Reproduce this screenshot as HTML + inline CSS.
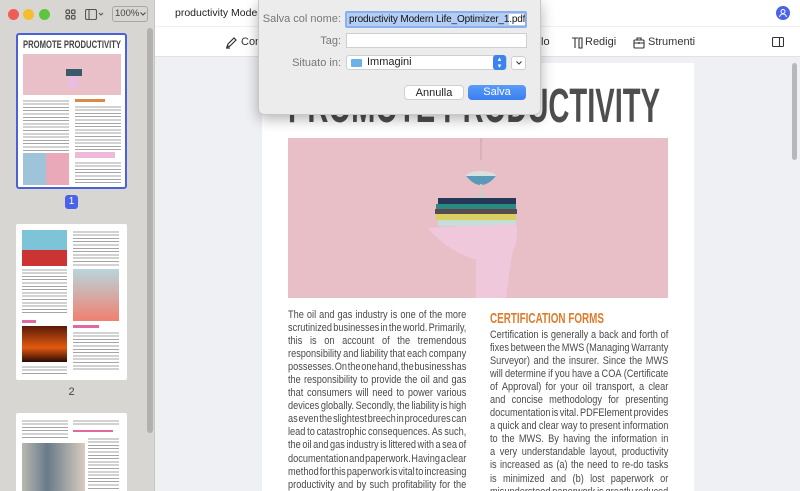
<!DOCTYPE html>
<html style="overflow:hidden;width:800px;height:491px"><head><meta charset="utf-8">
<style>
*{margin:0;padding:0;box-sizing:border-box}
body{width:800px;height:491px;overflow:hidden;font-family:"Liberation Sans",sans-serif;background:#eff0f4;position:relative}
.side{position:absolute;left:0;top:0;width:155px;height:491px;background:#d8d6d3;border-right:1px solid #c8c6c3}
.dot{position:absolute;top:9px;width:11px;height:11px;border-radius:50%}
.sb{position:absolute;left:147px;top:28px;width:6px;height:405px;background:#b3b1ae;border-radius:3px}
.thumb{position:absolute;left:16px;width:111px;background:#fff}
.lines{position:absolute;background:repeating-linear-gradient(#fff 0 1.3px,#a5a5a5 1.3px 2.3px,#fff 2.3px 3.3px)}
.hdr{position:absolute;left:155px;top:0;width:645px;height:57px;background:#fff;border-bottom:1px solid #e2e2e6}
.page{position:absolute;left:262px;top:63px;width:432px;height:428px;background:#fff}
.col{position:absolute;font-size:10.6px;line-height:13.05px;color:#4a4a4a;transform:scaleX(0.87);transform-origin:left top}
.col div{text-align:justify;text-align-last:justify;white-space:nowrap;display:flex;justify-content:space-between}
.col div.l{justify-content:flex-start;gap:3px}
.dlg{position:absolute;left:258px;top:0;width:283px;height:115px;background:#ececec;box-shadow:0 4px 14px rgba(0,0,0,.3);border:1px solid #c8c8c8;border-top:none;border-radius:0 0 6px 6px}
.lab{position:absolute;font-size:11px;color:#777;text-align:right;width:82px;left:0}
.inp{position:absolute;left:87px;height:15px;background:#fff;border:1px solid #cfcfcf}
.btn{position:absolute;top:85px;height:15px;border-radius:4px;font-size:11px;text-align:center;line-height:15px}
.tb{position:absolute;top:36px;font-size:11px;color:#333}
</style></head><body>

<div class="side">
  <div class="dot" style="left:8px;background:#ee5e57"></div>
  <div class="dot" style="left:23px;background:#f5bd30"></div>
  <div class="dot" style="left:39px;background:#5fc53f"></div>
  <svg style="position:absolute;left:65px;top:9px" width="11" height="11" viewBox="0 0 11 11" fill="none" stroke="#555" stroke-width="1.2"><rect x="1" y="1" width="3.5" height="3.5" rx="1"/><rect x="6.5" y="1" width="3.5" height="3.5" rx="1"/><rect x="1" y="6.5" width="3.5" height="3.5" rx="1"/><rect x="6.5" y="6.5" width="3.5" height="3.5" rx="1"/></svg>
  <svg style="position:absolute;left:85px;top:9px" width="20" height="11" viewBox="0 0 20 11" fill="none" stroke="#555" stroke-width="1.1"><rect x="0.5" y="0.5" width="11" height="10" rx="1.5"/><line x1="4" y1="0.5" x2="4" y2="10.5"/><path d="M14 4l2 2 2-2"/></svg>
  <div style="position:absolute;left:112px;top:6px;width:36px;height:16px;border:1px solid #a9a7a4;border-radius:3px;font-size:9.5px;color:#444;line-height:14px;padding-left:2px;white-space:nowrap;overflow:hidden">100%<svg style="position:absolute;left:27px;top:5px" width="6" height="4" viewBox="0 0 6 4" fill="none" stroke="#444"><path d="M0.5 0.5l2.5 2.5 2.5-2.5"/></svg></div>
  <div class="sb"></div>

  <div class="thumb" style="top:33px;height:156px;border:2px solid #4a62d8;border-radius:3px">
    <svg style="position:absolute;left:5px;top:3px" width="98" height="12"><text x="0" y="10" textLength="98" lengthAdjust="spacingAndGlyphs" font-family="Liberation Sans" font-weight="bold" font-size="11" fill="#444">PROMOTE PRODUCTIVITY</text></svg>
    <div style="position:absolute;left:5px;top:19px;width:98px;height:41px;background:#e9c0c8"></div>
    <div style="position:absolute;left:48px;top:34px;width:16px;height:7px;background:#3a5a6a"></div>
    <div style="position:absolute;left:50px;top:41px;width:10px;height:12px;background:#e8bde0"></div>
    <div class="lines" style="left:5px;top:64px;width:46px;height:52px"></div>
    <div style="position:absolute;left:57px;top:64px;width:30px;height:3px;background:#d98a4a"></div>
    <div class="lines" style="left:57px;top:70px;width:46px;height:46px"></div>
    <div style="position:absolute;left:57px;top:117px;width:40px;height:6px;background:#e58bc0;opacity:.6"></div>
    <div style="position:absolute;left:5px;top:118px;width:46px;height:32px;background:linear-gradient(90deg,#9fc3d8 50%,#e9a9b8 50%)"></div>
    <div class="lines" style="left:57px;top:126px;width:46px;height:24px"></div>
  </div>
  <div style="position:absolute;left:65px;top:195px;width:13px;height:14px;background:#4a62e8;border-radius:3px;color:#fff;font-size:10px;text-align:center;line-height:14px">1</div>

  <div class="thumb" style="top:224px;height:156px;border-radius:2px">
    <div style="position:absolute;left:6px;top:6px;width:45px;height:36px;background:linear-gradient(#7ec4d8 0 55%,#c33 55%)"></div>
    <div class="lines" style="left:57px;top:6px;width:46px;height:36px"></div>
    <div class="lines" style="left:6px;top:44px;width:45px;height:46px"></div>
    <div style="position:absolute;left:57px;top:45px;width:46px;height:52px;background:linear-gradient(#b8d6dc,#f08070)"></div>
    <div style="position:absolute;left:6px;top:96px;width:14px;height:3px;background:#e06aa0"></div>
    <div style="position:absolute;left:6px;top:102px;width:45px;height:36px;background:linear-gradient(#5a1a08,#e35a10 60%,#2a0a04)"></div>
    <div style="position:absolute;left:57px;top:101px;width:26px;height:3px;background:#e06aa0"></div>
    <div class="lines" style="left:57px;top:107px;width:46px;height:40px"></div>
    <div class="lines" style="left:6px;top:141px;width:45px;height:10px"></div>
  </div>
  <div style="position:absolute;left:65px;top:386px;width:13px;font-size:11px;color:#444;text-align:center">2</div>

  <div class="thumb" style="top:413px;height:80px;border-radius:2px">
    <div class="lines" style="left:6px;top:6px;width:46px;height:20px"></div>
    <div class="lines" style="left:57px;top:6px;width:46px;height:8px"></div>
    <div style="position:absolute;left:57px;top:17px;width:40px;height:2px;background:#e06aa0"></div>
    <div style="position:absolute;left:6px;top:30px;width:63px;height:50px;background:linear-gradient(90deg,#b8b8b0,#6a7a8a 40%,#d8ccc0)"></div>
    <div class="lines" style="left:72px;top:24px;width:31px;height:56px"></div>
  </div>
</div>

<div class="hdr">
  <div style="position:absolute;left:20px;top:7px;font-size:10.5px;color:#222">productivity Modern L</div>
  <div style="position:absolute;left:0;top:26px;width:645px;height:1px;background:#f0f0f0"></div>
  <svg style="position:absolute;left:70px;top:36px" width="13" height="13" viewBox="0 0 13 13" fill="none" stroke="#333" stroke-width="1.2"><path d="M2 11l1-3 6-6 2 2-6 6z M1 12h4"/></svg>
  <div class="tb" style="left:86px">Con</div>
  <div class="tb" style="left:386px">lo</div>
  <svg style="position:absolute;left:416px;top:37px" width="12" height="12" viewBox="0 0 12 12" fill="none" stroke="#333" stroke-width="1.1"><path d="M1 1h6M4 1v10M8 1h3v10h-3z"/></svg>
  <div class="tb" style="left:430px">Redigi</div>
  <svg style="position:absolute;left:478px;top:37px" width="12" height="12" viewBox="0 0 12 12" fill="none" stroke="#333" stroke-width="1.1"><rect x="1" y="3" width="10" height="8" rx="1"/><path d="M4 3V1h4v2M1 6h10M6 5v2"/></svg>
  <div class="tb" style="left:493px">Strumenti</div>
  <svg style="position:absolute;left:617px;top:37px" width="12" height="10" viewBox="0 0 12 10" fill="none" stroke="#333" stroke-width="1.1"><rect x="0.5" y="0.5" width="11" height="9" rx="1"/><line x1="7.5" y1="0.5" x2="7.5" y2="9.5"/></svg>
  <div style="position:absolute;left:621px;top:6px;width:14px;height:14px;border-radius:50%;background:#4a62e8"></div>
  <svg style="position:absolute;left:621px;top:6px" width="14" height="14" viewBox="0 0 14 14" fill="none" stroke="#fff" stroke-width="1"><circle cx="7" cy="5.5" r="2"/><path d="M3.5 11c.5-2 2-3 3.5-3s3 1 3.5 3"/></svg>
</div>

<div style="position:absolute;left:792px;top:63px;width:5px;height:97px;background:#b8b8bc;border-radius:3px"></div>

<div class="page"></div>
<svg style="position:absolute;left:288px;top:84px" width="374" height="44"><text x="0" y="38" textLength="372" lengthAdjust="spacingAndGlyphs" font-family="Liberation Sans" font-weight="bold" font-size="48" fill="#4e4e4e">PROMOTE PRODUCTIVITY</text></svg>
<div style="position:absolute;left:288px;top:138px;width:380px;height:160px;background:#e8bfc7;overflow:hidden">
  <svg width="380" height="160" viewBox="0 0 380 160">
    <line x1="193" y1="0" x2="193" y2="22" stroke="#c8a0a8" stroke-width="1"/>
    <ellipse cx="193" cy="38" rx="15" ry="5" fill="#d8e0e0"/>
    <path d="M178 38q15 18 30 0z" fill="#5a9ab8"/>
    <rect x="192" y="46" width="2" height="12" fill="#ccc"/>
    <ellipse cx="193" cy="59" rx="7" ry="2" fill="#ccc"/>
    <rect x="150" y="60" width="78" height="6" fill="#26385a"/>
    <rect x="148" y="66" width="80" height="5" fill="#2a8a80"/>
    <rect x="147" y="71" width="82" height="5" fill="#5a4a50"/>
    <rect x="148" y="76" width="80" height="6" fill="#d8d060"/>
    <rect x="150" y="82" width="78" height="6" fill="#c8dcd8"/>
    <path d="M140 90q30 -2 88 -4q4 10 -4 30l-6 44h-30l0 -38q-30 -10 -48 -32z" fill="#f0c8dc"/>
  </svg>
</div>

<div class="col" style="left:288px;top:309px;width:205px">
<div><span>The</span><span>oil</span><span>and</span><span>gas</span><span>industry</span><span>is</span><span>one</span><span>of</span><span>the</span><span>more</span></div>
<div><span>scrutinized</span><span>businesses</span><span>in</span><span>the</span><span>world.</span><span>Primarily,</span></div>
<div><span>this</span><span>is</span><span>on</span><span>account</span><span>of</span><span>the</span><span>tremendous</span></div>
<div><span>responsibility</span><span>and</span><span>liability</span><span>that</span><span>each</span><span>company</span></div>
<div><span>possesses.</span><span>On</span><span>the</span><span>one</span><span>hand,</span><span>the</span><span>business</span><span>has</span></div>
<div><span>the</span><span>responsibility</span><span>to</span><span>provide</span><span>the</span><span>oil</span><span>and</span><span>gas</span></div>
<div><span>that</span><span>consumers</span><span>will</span><span>need</span><span>to</span><span>power</span><span>various</span></div>
<div><span>devices</span><span>globally.</span><span>Secondly,</span><span>the</span><span>liability</span><span>is</span><span>high</span></div>
<div><span>as</span><span>even</span><span>the</span><span>slightest</span><span>breech</span><span>in</span><span>procedures</span><span>can</span></div>
<div><span>lead</span><span>to</span><span>catastrophic</span><span>consequences.</span><span>As</span><span>such,</span></div>
<div><span>the</span><span>oil</span><span>and</span><span>gas</span><span>industry</span><span>is</span><span>littered</span><span>with</span><span>a</span><span>sea</span><span>of</span></div>
<div><span>documentation</span><span>and</span><span>paperwork.</span><span>Having</span><span>a</span><span>clear</span></div>
<div><span>method</span><span>for</span><span>this</span><span>paperwork</span><span>is</span><span>vital</span><span>to</span><span>increasing</span></div>
<div><span>productivity</span><span>and</span><span>by</span><span>such</span><span>profitability</span><span>for</span><span>the</span></div>
</div>
<svg style="position:absolute;left:490px;top:308px" width="120" height="18"><text x="0" y="15" textLength="114" lengthAdjust="spacingAndGlyphs" font-family="Liberation Sans" font-weight="bold" font-size="15" fill="#e07a2a">CERTIFICATION FORMS</text></svg>
<div class="col" style="left:490px;top:329px;width:205px">
<div><span>Certification</span><span>is</span><span>generally</span><span>a</span><span>back</span><span>and</span><span>forth</span><span>of</span></div>
<div><span>fixes</span><span>between</span><span>the</span><span>MWS</span><span>(Managing</span><span>Warranty</span></div>
<div><span>Surveyor)</span><span>and</span><span>the</span><span>insurer.</span><span>Since</span><span>the</span><span>MWS</span></div>
<div><span>will</span><span>determine</span><span>if</span><span>you</span><span>have</span><span>a</span><span>COA</span><span>(Certificate</span></div>
<div><span>of</span><span>Approval)</span><span>for</span><span>your</span><span>oil</span><span>transport,</span><span>a</span><span>clear</span></div>
<div><span>and</span><span>concise</span><span>methodology</span><span>for</span><span>presenting</span></div>
<div><span>documentation</span><span>is</span><span>vital.</span><span>PDFElement</span><span>provides</span></div>
<div><span>a</span><span>quick</span><span>and</span><span>clear</span><span>way</span><span>to</span><span>present</span><span>information</span></div>
<div><span>to</span><span>the</span><span>MWS.</span><span>By</span><span>having</span><span>the</span><span>information</span><span>in</span></div>
<div><span>a</span><span>very</span><span>understandable</span><span>layout,</span><span>productivity</span></div>
<div><span>is</span><span>increased</span><span>as</span><span>(a)</span><span>the</span><span>need</span><span>to</span><span>re-do</span><span>tasks</span></div>
<div><span>is</span><span>minimized</span><span>and</span><span>(b)</span><span>lost</span><span>paperwork</span><span>or</span></div>
<div><span>misunderstood</span><span>paperwork</span><span>is</span><span>greatly</span><span>reduced</span></div>
</div>

<div class="dlg">
  <div class="lab" style="top:13px">Salva col nome:</div>
  <div style="position:absolute;left:86px;top:11px;width:182px;height:17px;border:2px solid #8ab0ee;border-radius:2px;background:#b4cdf5;font-size:10px;line-height:13px;padding-left:2px;color:#111;white-space:nowrap;overflow:hidden;letter-spacing:-0.15px">productivity Modern Life_Optimizer_1<span style="background:#fff">.pdf</span></div>
  <div class="lab" style="top:35px">Tag:</div>
  <div class="inp" style="top:33px;width:181px"></div>
  <div class="lab" style="top:57px">Situato in:</div>
  <div class="inp" style="top:55px;width:161px;border-radius:3px;font-size:11px;line-height:13px;padding-left:20px;color:#222">Immagini</div>
  <div style="position:absolute;left:92px;top:59px;width:11px;height:8px;background:#6cb2e8;border-radius:1px"></div>
  <div style="position:absolute;left:234px;top:55px;width:13px;height:15px;background:#3e82f0;border-radius:3px;color:#fff;font-size:7px;text-align:center;line-height:7px;padding-top:1px">▴<br>▾</div>
  <div style="position:absolute;left:252px;top:56px;width:15px;height:14px;background:#fff;border:1px solid #cfcfcf;border-radius:3px"><svg style="position:absolute;left:4px;top:4px" width="6" height="4" viewBox="0 0 6 4" fill="none" stroke="#333"><path d="M0.5 0.5l2.5 2.5 2.5-2.5"/></svg></div>
  <div class="btn" style="left:145px;width:60px;background:#fff;border:1px solid #d0d0d0;color:#222">Annulla</div>
  <div class="btn" style="left:209px;width:58px;background:linear-gradient(#5a9cf8,#3a7ef0);color:#fff">Salva</div>
</div>
</body></html>
